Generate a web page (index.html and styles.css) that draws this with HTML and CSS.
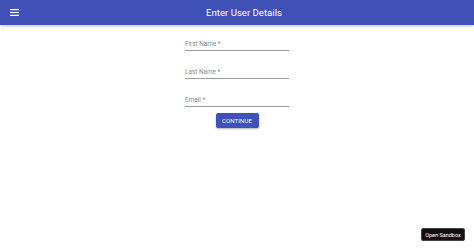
FILE: index.html
```html
<!DOCTYPE html>
<html>
<head>
<meta charset="utf-8">
<link rel="stylesheet" href="styles.css">
</head>
<body>
<header class="appbar">
  <button class="menu" aria-label="menu">
    <svg width="9" height="7" viewBox="0 0 9 7"><rect x="0" y="0" width="9" height="1.2" fill="#fff"/><rect x="0" y="2.9" width="9" height="1.2" fill="#fff"/><rect x="0" y="5.8" width="9" height="1.2" fill="#fff"/></svg>
  </button>
  <h1 class="title">Enter User Details</h1>
</header>
<main class="form">
  <label class="field"><span class="label">First Name *</span><span class="line"></span></label>
  <label class="field"><span class="label">Last Name *</span><span class="line"></span></label>
  <label class="field"><span class="label">Email *</span><span class="line"></span></label>
  <button class="continue">CONTINUE</button>
</main>
<a class="sandbox">Open Sandbox</a>
</body>
</html>
```
FILE: styles.css
```css
html, body { margin: 0; padding: 0; background: #fff; }
body { font-family: Roboto, "Liberation Sans", sans-serif; width: 474px; height: 248px; overflow: hidden; position: relative; }
.appbar { height: 25px; background: #3f51b5; display: flex; align-items: center; position: relative; box-shadow: 0 1px 3px rgba(0,0,0,0.25); }
.menu { border: 0; background: none; padding: 0; margin-left: 10px; width: 9px; height: 7px; display: flex; }
.title { margin: 0; font-weight: 400; color: #fff; font-size: 9.6px; position: absolute; left: 0; right: 0; text-align: center; pointer-events: none; top: 6px; line-height: 13px; padding-left: 14px; }
.form { display: flex; flex-direction: column; align-items: center; padding-top: 15px; }
.field { display: flex; flex-direction: column; width: 104px; margin-bottom: 17px; }
.field:last-of-type { margin-bottom: 6px; }
.label { font-size: 6.4px; color: #8a8a8a; line-height: 8px; height: 9px; margin-bottom: 1px; }
.line { height: 1px; background: #9a9a9a; }
.continue { border: 0; background: #3f51b5; color: #fff; font-family: Roboto, "Liberation Sans", sans-serif; font-size: 6px; font-weight: 400; letter-spacing: 0.1px; width: 43px; height: 15px; border-radius: 2px; padding: 0; box-shadow: 0 1px 2px rgba(0,0,0,0.3); }
.sandbox { position: absolute; right: 9px; bottom: 7px; background: #111; color: #fff; font-size: 5.5px; height: 13px; line-height: 12px; border-radius: 2px; border: 1px solid #444; box-sizing: border-box; width: 44px; text-align: center; white-space: nowrap; }
```
